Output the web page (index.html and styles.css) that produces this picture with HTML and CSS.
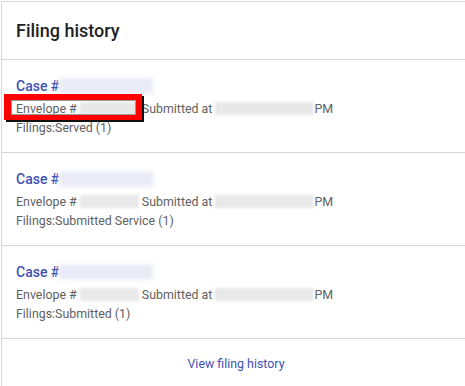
FILE: index.html
```html
<!DOCTYPE html>
<html lang="en">
<head>
  <meta charset="UTF-8" />
  <meta name="viewport" content="width=device-width, initial-scale=1.0"/>
  <title>Filing history</title>
  <link rel="stylesheet" href="styles.css">
</head>
<body>

<div class="card">
  <div class="card-header">
    <h2>Filing history</h2>
  </div>

  <!-- filing rows -->
  <div class="filing">
    <div class="case">Case #<span class="blur case-no"></span></div>
    <div class="meta">Envelope # <span class="blur env"></span> Submitted at <span class="blur date"></span>PM</div>
    <div class="meta">Filings:Served (1)</div>
    <div class="mark"></div>
  </div>

  <div class="filing">
    <div class="case">Case #<span class="blur case-no"></span></div>
    <div class="meta">Envelope # <span class="blur env"></span> Submitted at <span class="blur date"></span>PM</div>
    <div class="meta">Filings:Submitted Service (1)</div>
  </div>

  <div class="filing">
    <div class="case">Case #<span class="blur case-no"></span></div>
    <div class="meta">Envelope # <span class="blur env"></span> Submitted at <span class="blur date"></span>PM</div>
    <div class="meta">Filings:Submitted (1)</div>
  </div>

  <div class="card-footer">
    <a href="#">View filing history</a>
  </div>
</div>

</body>
</html>
```

FILE: styles.css
```css
body {
  margin: 0;
  font-family: Roboto, "Liberation Sans", Arial, sans-serif;
  background: #fff;
  overflow: hidden;
}

.card {
  margin: 1px 0 0 1px;
  width: 468px;
  border: 1px solid #dadada;
  background: white;
}

.card-header {
  padding: 17px 14px 16px;
  border-bottom: 1px solid #d6d6d6;
}

h2 {
  margin: 0;
  font-size: 18px;
  line-height: 24px;
  font-weight: 500;
  color: #212121;
}

.filing {
  position: relative;
  padding: 16px 14px 15px;
  border-bottom: 1px solid #d6d6d6;
}

.case {
  font-size: 14px;
  line-height: 20px;
  font-weight: 500;
  color: #3f51b5;
  margin-bottom: 3px;
}

.meta {
  font-size: 12.4px;
  line-height: 19px;
  color: #616161;
  white-space: nowrap;
}

.blur {
  display: inline-block;
  vertical-align: middle;
  background: #e8e8e8;
  filter: blur(1.5px);
}

.case-no {
  width: 94px;
  height: 16px;
  margin-top: -3px;
  background: #ebebf7;
  filter: blur(2px);
}

.env {
  width: 59px;
  height: 13px;
  margin-top: -2px;
}

.date {
  width: 99px;
  height: 13px;
  margin-top: -2px;
}

/* red annotation box around the first envelope number */
.mark {
  position: absolute;
  left: 2px;
  top: 34px;
  width: 125px;
  height: 15px;
  border: 6px solid #f00;
  border-left-width: 7px;
  border-bottom-width: 5px;
  box-shadow: 2px 2px 0 #111, inset 0 0 0 1px #9a9a9a;
}

.card-footer {
  padding: 14px 0;
  text-align: center;
}

.card-footer a {
  font-size: 12.4px;
  line-height: 19px;
  color: #3f51b5;
  text-decoration: none;
}
```
